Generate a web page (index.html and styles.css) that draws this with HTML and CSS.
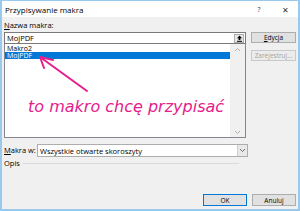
FILE: index.html
```html
<!DOCTYPE html>
<html lang="pl">
<head>
<meta charset="utf-8">
<link rel="stylesheet" href="styles.css">
</head>
<body>
<div class="window">
  <div class="titlebar">
    <span class="title">Przypisywanie makra</span>
    <span class="tb-icons"><span class="help">?</span><span class="close">✕</span></span>
  </div>
  <div class="content">
    <div class="top">
      <div class="leftcol">
        <div class="label"><u>N</u>azwa makra:</div>
        <div class="input">
          <span>MojPDF</span>
          <span class="refbtn"><svg width="7" height="7" viewBox="0 0 7 7"><path d="M3.5 0.5 L6 3.2 H4.4 V5 H2.6 V3.2 H1 Z" fill="#000"/><rect x="1" y="5.8" width="5" height="1" fill="#000"/></svg></span>
        </div>
        <div class="list">
          <div class="items">
            <div class="item">Makro2</div>
            <div class="item sel">MojPDF</div>
          </div>
          <div class="scroll">
            <svg width="7" height="5" viewBox="0 0 7 5"><path d="M1 4 L3.5 1.5 L6 4" fill="none" stroke="#a6a6a6" stroke-width="0.9"/></svg>
            <svg width="7" height="5" viewBox="0 0 7 5"><path d="M1 1 L3.5 3.5 L6 1" fill="none" stroke="#a6a6a6" stroke-width="0.9"/></svg>
          </div>
        </div>
      </div>
      <div class="rightcol">
        <div class="btn"><u>E</u>dycja</div>
        <div class="btn disabled">Zarejestruj...</div>
      </div>
    </div>
    <div class="macrosin">
      <span class="label"><u>M</u>akra w:</span>
      <div class="select">
        <span>Wszystkie otwarte skoroszyty</span>
        <span class="selbtn"><svg width="7" height="5" viewBox="0 0 7 5"><path d="M1 1 L3.5 3.5 L6 1" fill="none" stroke="#606060" stroke-width="0.9"/></svg></span>
      </div>
    </div>
    <div class="opis">
      <span class="label">Opis</span>
      <span class="rule"></span>
    </div>
    <div class="footer">
      <div class="btn ok">OK</div>
      <div class="btn">Anuluj</div>
    </div>
  </div>
  <svg class="arrow" width="300" height="211" viewBox="0 0 300 211">
    <g stroke="#e5208b" stroke-width="2" stroke-linecap="round" fill="none">
      <path d="M87 91 L40 57"/>
      <path d="M40 57 L53 60"/>
      <path d="M40 57 L44 68"/>
    </g>
  </svg>
  <div class="note">to makro chcę przypisać</div>
</div>
</body>
</html>
```
FILE: styles.css
```css
html, body {
  margin: 0;
  padding: 0;
  width: 300px;
  height: 211px;
  overflow: hidden;
  background: #f0f0f0;
}
.window {
  position: relative;
  box-sizing: border-box;
  width: 300px;
  height: 211px;
  border: 2px solid #99c9ec;
  border-top-width: 1px;
  background: #f0f0f0;
  display: flex;
  flex-direction: column;
  font-family: "Open Sans", "Noto Sans", sans-serif;
  font-size: 7.5px;
  color: #000;
}
.titlebar {
  height: 16px;
  background: #fff;
  display: flex;
  align-items: center;
  justify-content: space-between;
  padding: 0 0 0 3px;
  font-size: 8px;
}
.tb-icons {
  display: flex;
  align-items: center;
}
.help {
  width: 26px;
  text-align: center;
  font-size: 7px;
  color: #333;
}
.close {
  width: 26px;
  text-align: center;
  font-size: 8px;
  color: #333;
}
.content {
  flex: 1;
  display: flex;
  flex-direction: column;
  padding: 3px 2px 3px 2px;
}
.top {
  display: flex;
}
.leftcol {
  width: 244px;
  display: flex;
  flex-direction: column;
}
.label {
  height: 11px;
  line-height: 11px;
}
.input {
  box-sizing: border-box;
  height: 12px;
  margin-top: 1px;
  background: #fff;
  border: 1px solid #7a7a7a;
  display: flex;
  align-items: center;
  justify-content: space-between;
  padding-left: 2px;
}
.refbtn {
  width: 10px;
  height: 9px;
  margin-right: 1px;
  border: 1px solid #adadad;
  background: #e6e6e6;
  box-sizing: border-box;
  display: flex;
  align-items: center;
  justify-content: center;
}
.list {
  box-sizing: border-box;
  height: 94px;
  background: #fff;
  border: 1px solid #828790;
  border-top: none;
  display: flex;
}
.items {
  flex: 1;
  padding-top: 1px;
}
.item {
  height: 7px;
  line-height: 7px;
  padding-left: 2px;
  font-size: 7px;
}
.item.sel {
  background: #0078d7;
  color: #fff;
}
.scroll {
  width: 15px;
  background: #f0f0f0;
  display: flex;
  flex-direction: column;
  justify-content: space-between;
  align-items: center;
  padding: 3px 0 2px 0;
}
.rightcol {
  display: flex;
  flex-direction: column;
  margin-left: 5px;
  margin-top: 12px;
  gap: 7px;
}
.btn {
  box-sizing: border-box;
  width: 45px;
  height: 11px;
  background: #e1e1e1;
  border: 1px solid #adadad;
  display: flex;
  align-items: center;
  justify-content: center;
  font-size: 6.5px;
}
.btn.disabled {
  color: #a3a3a3;
  border-color: #c9c9c9;
  background: #ececec;
}
.macrosin {
  display: flex;
  align-items: center;
  margin-top: 6px;
  height: 13px;
}
.macrosin .label {
  width: 33px;
}
.select {
  box-sizing: border-box;
  width: 211px;
  height: 13px;
  background: #fff;
  border: 1px solid #adadad;
  display: flex;
  align-items: center;
  justify-content: space-between;
  padding-left: 2px;
}
.selbtn {
  box-sizing: border-box;
  width: 10px;
  height: 11px;
  background: #e8e8e8;
  border-left: 1px solid #cfcfcf;
  display: flex;
  align-items: center;
  justify-content: center;
}
.opis {
  display: flex;
  align-items: center;
  margin-top: 1px;
}
.opis .label {
  margin-right: 3px;
}
.rule {
  width: 216px;
  height: 1px;
  background: #dadada;
}
.footer {
  margin-top: auto;
  display: flex;
  justify-content: flex-end;
  gap: 5px;
  height: 12px;
}
.footer .btn {
  width: 44px;
  height: 12px;
}
.btn.ok {
  border-color: #0078d7;
}
.arrow {
  position: absolute;
  left: -2px;
  top: -1px;
  pointer-events: none;
}
.note {
  position: absolute;
  left: 26px;
  top: 96px;
  font-family: "DejaVu Sans", sans-serif;
  font-style: italic;
  font-size: 16px;
  color: #e5208b;
  white-space: nowrap;
}
```
